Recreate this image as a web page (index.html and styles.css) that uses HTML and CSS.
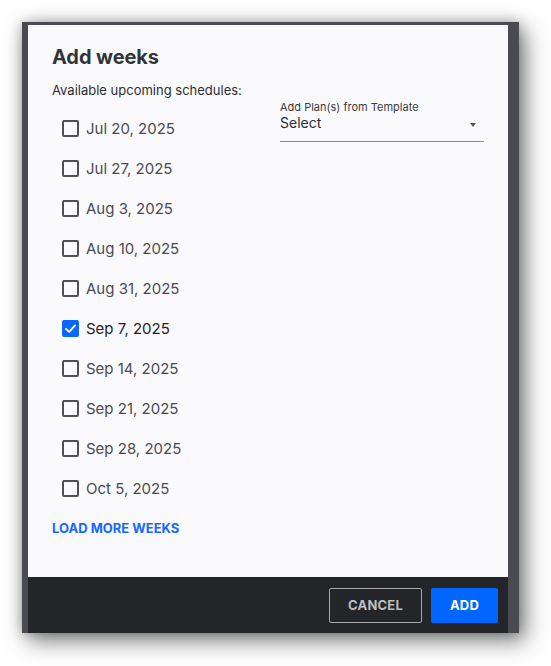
FILE: index.html
```html
<!DOCTYPE html>
<html>
<head>
<meta charset="utf-8">
<link rel="stylesheet" href="styles.css">
</head>
<body>
<div class="backdrop">
  <div class="modal">
    <div class="modal-body">
      <h1 class="title">Add weeks</h1>
      <div class="columns">
        <div class="left">
          <div class="subhead">Available upcoming schedules:</div>
          <ul class="weeks">
            <li class="week"><span class="box"></span><span class="label">Jul 20, 2025</span></li>
            <li class="week"><span class="box"></span><span class="label">Jul 27, 2025</span></li>
            <li class="week"><span class="box"></span><span class="label">Aug 3, 2025</span></li>
            <li class="week"><span class="box"></span><span class="label">Aug 10, 2025</span></li>
            <li class="week"><span class="box"></span><span class="label">Aug 31, 2025</span></li>
            <li class="week checked"><span class="box"><svg viewBox="0 0 18 18" width="18" height="18"><path d="M4.2 9.4 L7.6 12.6 L13.8 5.8" fill="none" stroke="#fff" stroke-width="2" stroke-linecap="round" stroke-linejoin="round"/></svg></span><span class="label">Sep 7, 2025</span></li>
            <li class="week"><span class="box"></span><span class="label">Sep 14, 2025</span></li>
            <li class="week"><span class="box"></span><span class="label">Sep 21, 2025</span></li>
            <li class="week"><span class="box"></span><span class="label">Sep 28, 2025</span></li>
            <li class="week"><span class="box"></span><span class="label">Oct 5, 2025</span></li>
          </ul>
          <a class="load-more">LOAD MORE WEEKS</a>
        </div>
        <div class="right">
          <div class="field-label">Add Plan(s) from Template</div>
          <div class="select">
            <span class="select-value">Select</span>
            <span class="caret"></span>
          </div>
        </div>
      </div>
    </div>
    <div class="footer">
      <button class="btn btn-cancel">CANCEL</button>
      <button class="btn btn-add">ADD</button>
    </div>
  </div>
</div>
</body>
</html>
```

FILE: styles.css
```css
* { box-sizing: border-box; }
html, body { margin: 0; padding: 0; background: #ffffff; }
body {
  font-family: "Inter", "Lato", "Liberation Sans", sans-serif;
  color: #3c3c41;
  width: 551px;
  height: 666px;
  overflow: hidden;
}
.backdrop {
  margin: 22px 0 0 22px;
  width: 497px;
  height: 611px;
  background: #4a4b51;
  padding: 3px 11px 0 6px;
  box-shadow: 6px 8px 22px rgba(0,0,0,0.5), 0 0 12px rgba(0,0,0,0.25);
}
.modal {
  width: 480px;
  height: 608px;
  background: #fafafc;
  display: flex;
  flex-direction: column;
}
.modal-body {
  flex: 1;
  padding: 20px 24px 0 24px;
}
.title {
  margin: 0;
  font-size: 20px;
  line-height: 24px;
  font-weight: 700;
  color: #333338;
  letter-spacing: -0.1px;
}
.columns {
  display: grid;
  grid-template-columns: 228px 204px;
  margin-top: 13px;
}
.subhead {
  font-size: 13px;
  line-height: 16px;
  color: #2e2e33;
}
.weeks {
  list-style: none;
  margin: 10px 0 0 0;
  padding: 0 0 0 10px;
}
.week {
  height: 40px;
  display: flex;
  align-items: center;
  gap: 7px;
}
.box {
  width: 17px;
  height: 17px;
  border: 2px solid #505056;
  border-radius: 2px;
  display: flex;
  align-items: center;
  justify-content: center;
  flex-shrink: 0;
}
.checked .box {
  background: #0a66ff;
  border-color: #0a66ff;
}
.checked .box svg { width: 17px; height: 17px; flex-shrink: 0; }
.label {
  font-size: 15px;
  color: #4a4a50;
}
.checked .label { color: #222226; }
.load-more {
  display: block;
  margin-top: 12px;
  font-size: 13px;
  font-weight: 700;
  color: #1568ff;
  line-height: 16px;
}
.right { padding-top: 19px; }
.field-label {
  font-size: 11px;
  line-height: 13px;
  color: #3a3a40;
}
.select {
  display: flex;
  align-items: flex-start;
  justify-content: space-between;
  height: 28px;
  border-bottom: 1px solid #8f8f95;
  padding-top: 1px;
  padding-right: 8px;
}
.select-value {
  font-size: 14px;
  color: #2c2c31;
  line-height: 16px;
}
.caret {
  width: 0;
  height: 0;
  border-left: 3.5px solid transparent;
  border-right: 3.5px solid transparent;
  border-top: 4px solid #55555b;
  margin-top: 8px;
}
.footer {
  height: 56px;
  background: #242528;
  display: flex;
  justify-content: flex-end;
  align-items: center;
  gap: 9px;
  padding-right: 10px;
}
.btn {
  height: 35px;
  font-family: inherit;
  font-size: 13px;
  font-weight: 700;
  border-radius: 2px;
  letter-spacing: 0.2px;
  padding: 0;
}
.btn-cancel {
  width: 93px;
  background: transparent;
  border: 1px solid #a9a9ad;
  color: #bdbdc1;
}
.btn-add {
  width: 67px;
  background: #0066ff;
  border: none;
  color: #ffffff;
}
```
